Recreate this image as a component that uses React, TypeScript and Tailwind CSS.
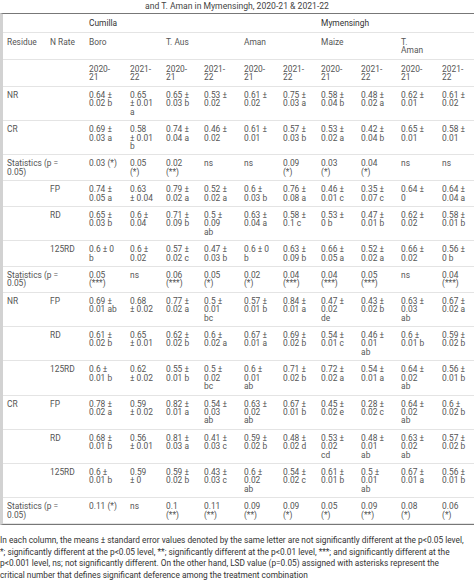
import React from 'react';

type Row = { residue?: string; rate?: string; stats?: boolean; cells: string[] };

const widths = [43, 39, 41, 36, 38, 40, 39, 38, 40, 40, 41, 36];

const rows: Row[] = [
  {
    residue: 'NR',
    cells: ['0.64 ±\n0.02 b', '0.65\n± 0.01\na', '0.65 ±\n0.03 b', '0.53 ±\n0.02', '0.61 ±\n0.02', '0.75 ±\n0.03 a', '0.58 ±\n0.04 b', '0.48 ±\n0.02 a', '0.62 ±\n0.01', '0.61 ±\n0.02'],
  },
  {
    residue: 'CR',
    cells: ['0.69 ±\n0.03 a', '0.58\n± 0.01\nb', '0.74 ±\n0.04 a', '0.46 ±\n0.02', '0.61 ±\n0.01', '0.57 ±\n0.03 b', '0.53 ±\n0.02 a', '0.42 ±\n0.04 b', '0.65 ±\n0.01', '0.58 ±\n0.01'],
  },
  {
    stats: true,
    cells: ['0.03 (*)', '0.05\n(*)', '0.02\n(**)', 'ns', 'ns', '0.09\n(*)', '0.03\n(*)', '0.04\n(*)', 'ns', 'ns'],
  },
  {
    rate: 'FP',
    cells: ['0.74 ±\n0.05 a', '0.63\n± 0.04', '0.79 ±\n0.02 a', '0.52 ±\n0.02 a', '0.6 ±\n0.03 b', '0.76 ±\n0.08 a', '0.46 ±\n0.01 c', '0.35 ±\n0.07 c', '0.64 ±\n0', '0.64 ±\n0.04 a'],
  },
  {
    rate: 'RD',
    cells: ['0.65 ±\n0.03 b', '0.6 ±\n0.04', '0.71 ±\n0.09 b', '0.5 ±\n0.09\nab', '0.63 ±\n0.04 a', '0.58 ±\n0.1 c', '0.53 ±\n0 b', '0.47 ±\n0.01 b', '0.62 ±\n0.02', '0.58 ±\n0.01 b'],
  },
  {
    rate: '125RD',
    cells: ['0.6 ± 0\nb', '0.6 ±\n0.02', '0.57 ±\n0.02 c', '0.47 ±\n0.03 b', '0.6 ± 0\nb', '0.63 ±\n0.09 b', '0.66 ±\n0.05 a', '0.52 ±\n0.02 a', '0.66 ±\n0.02', '0.56 ±\n0 b'],
  },
  {
    stats: true,
    cells: ['0.05\n(***)', 'ns', '0.06\n(***)', '0.05\n(*)', '0.02\n(*)', '0.04\n(***)', '0.04\n(***)', '0.05\n(***)', 'ns', '0.04\n(***)'],
  },
  {
    residue: 'NR',
    rate: 'FP',
    cells: ['0.69 ±\n0.01 ab', '0.68\n± 0.02', '0.77 ±\n0.02 a', '0.5 ±\n0.01\nbc', '0.57 ±\n0.01 b', '0.84 ±\n0.01 a', '0.47 ±\n0.02\nde', '0.43 ±\n0.02 b', '0.63 ±\n0.03\nab', '0.67 ±\n0.02 a'],
  },
  {
    rate: 'RD',
    cells: ['0.61 ±\n0.02 b', '0.65\n± 0.01', '0.62 ±\n0.02 b', '0.6 ±\n0.02 a', '0.67 ±\n0.01 a', '0.69 ±\n0.02 b', '0.54 ±\n0.01 c', '0.46 ±\n0.01\nab', '0.6 ±\n0.01 b', '0.59 ±\n0.02 b'],
  },
  {
    rate: '125RD',
    cells: ['0.6 ±\n0.01 b', '0.62\n± 0.02', '0.55 ±\n0.01 b', '0.5 ±\n0.02\nbc', '0.6 ±\n0.01\nab', '0.71 ±\n0.02 b', '0.72 ±\n0.02 a', '0.54 ±\n0.01 a', '0.64 ±\n0.02\nab', '0.56 ±\n0.01 b'],
  },
  {
    residue: 'CR',
    rate: 'FP',
    cells: ['0.78 ±\n0.02 a', '0.59\n± 0.02', '0.82 ±\n0.01 a', '0.54 ±\n0.03\nab', '0.63 ±\n0.02\nab', '0.67 ±\n0.01 b', '0.45 ±\n0.02 e', '0.28 ±\n0.02 c', '0.64 ±\n0.02\nab', '0.6 ±\n0.02 b'],
  },
  {
    rate: 'RD',
    cells: ['0.68 ±\n0.01 b', '0.56\n± 0.01', '0.81 ±\n0.03 a', '0.41 ±\n0.03 c', '0.59 ±\n0.02 b', '0.48 ±\n0.02 d', '0.53 ±\n0.02\ncd', '0.48 ±\n0.01\nab', '0.63 ±\n0.02\nab', '0.57 ±\n0.02 b'],
  },
  {
    rate: '125RD',
    cells: ['0.6 ±\n0.01 b', '0.59\n± 0', '0.59 ±\n0.02 b', '0.43 ±\n0.03 c', '0.6 ±\n0.02\nab', '0.54 ±\n0.02 c', '0.61 ±\n0.01 b', '0.5 ±\n0.01\nab', '0.67 ±\n0.01 a', '0.56 ±\n0.01 b'],
  },
  {
    stats: true,
    cells: ['0.11 (*)', 'ns', '0.1\n(**)', '0.11\n(**)', '0.09\n(**)', '0.09\n(*)', '0.05\n(*)', '0.09\n(**)', '0.08\n(*)', '0.06\n(*)'],
  },
];

const td = 'px-[4px] py-[4px] align-top whitespace-pre leading-[8.4px] border-b border-[#e4e4e4]';
const th = 'px-[4px] py-[4.5px] align-top whitespace-pre leading-[8.4px] border-b border-[#e4e4e4] font-normal text-left';

const App = () => {
  return (
    <div className="w-[474px] h-[583px] overflow-hidden bg-white font-['Roboto',sans-serif] text-[#555]">
      <div className="mt-[-10.5px] text-center text-[8.6px] leading-[11.7px] text-[#444]">
        <p className="whitespace-nowrap">The effect of crop residue and N rate on the harvest index of Boro, T. Aus and Aman in Cumilla, and Maize</p>
        <p className="whitespace-nowrap">and T. Aman in Mymensingh, 2020-21 &amp; 2021-22</p>
      </div>

      <div className="border-t border-b border-[#777] border-l-[3px] border-l-[#d2d2d2]">
        <table className="w-full table-fixed border-collapse text-[8.4px]">
          <colgroup>
            {widths.map((w, i) => (
              <col key={i} style={{ width: w }} />
            ))}
          </colgroup>
          <thead>
            <tr>
              <th className={`${th} pt-[5px] pb-[5px]`}></th>
              <th className={`${th} pt-[5px] pb-[5px]`}></th>
              <th colSpan={6} className={`${th} pt-[5px] pb-[5px] text-[#333] font-medium`}>Cumilla</th>
              <th colSpan={4} className={`${th} pt-[5px] pb-[5px] text-[#333] font-medium`}>Mymensingh</th>
            </tr>
            <tr>
              <th className={th}>Residue</th>
              <th className={th}>N Rate</th>
              <th colSpan={2} className={th}>Boro</th>
              <th colSpan={2} className={th}>T. Aus</th>
              <th colSpan={2} className={th}>Aman</th>
              <th colSpan={2} className={th}>Maize</th>
              <th colSpan={2} className={th}>{'T.\nAman'}</th>
            </tr>
            <tr>
              <th className={th}></th>
              <th className={th}></th>
              {[0, 1, 2, 3, 4].map((i) => (
                <React.Fragment key={i}>
                  <th className={th}>{'2020-\n21'}</th>
                  <th className={th}>{'2021-\n22'}</th>
                </React.Fragment>
              ))}
            </tr>
          </thead>
          <tbody>
            {rows.map((r, i) => (
              <tr key={i}>
                {r.stats ? (
                  <td colSpan={2} className={td}>{'Statistics (p =\n0.05)'}</td>
                ) : (
                  <>
                    <td className={td}>{r.residue ?? ''}</td>
                    <td className={td}>{r.rate ?? ''}</td>
                  </>
                )}
                {r.cells.map((c, j) => (
                  <td key={j} className={td}>{c}</td>
                ))}
              </tr>
            ))}
          </tbody>
        </table>
      </div>

      <div className="mt-[10px] text-[8.3px] leading-[11.7px] text-[#333]">
        <p className="whitespace-nowrap">In each column, the means ± standard error values denoted by the same letter are not significantly different at the p&lt;0.05 level,</p>
        <p className="whitespace-nowrap">*; significantly different at the p&lt;0.05 level, **; significantly different at the p&lt;0.01 level, ***; and significantly different at the</p>
        <p className="whitespace-nowrap">p&lt;0.001 level, ns; not significantly different. On the other hand, LSD value (p=0.05) assigned with asterisks represent the</p>
        <p className="whitespace-nowrap">critical number that defines significant deference among the treatment combination</p>
      </div>
    </div>
  );
};

export default App;
